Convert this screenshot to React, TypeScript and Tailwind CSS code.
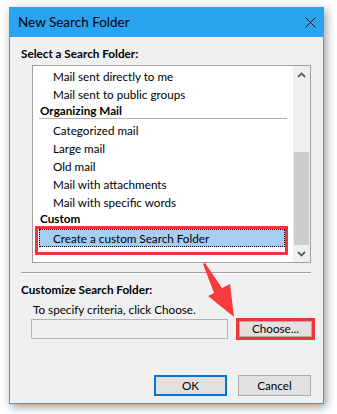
import React from 'react'

const font = { fontFamily: '"Segoe UI", Lato, "Noto Sans", sans-serif' }

function Chevron({ up }: { up?: boolean }) {
  return (
    <svg width="9" height="6" viewBox="0 0 9 6" className="block">
      <polyline
        points={up ? '1,5 4.5,1.5 8,5' : '1,1 4.5,4.5 8,1'}
        fill="none"
        stroke="#606060"
        strokeWidth="1.8"
      />
    </svg>
  )
}

function Item({ label }: { label: string }) {
  return <div className="h-[18px] leading-[18px] pl-[20px] text-black">{label}</div>
}

function Heading({ label, line }: { label: string; line?: boolean }) {
  return (
    <div>
      <div className="h-[15px] leading-[15px] pl-[7px] font-bold">{label}</div>
      {line && <div className="ml-[6px] w-[248px] h-px bg-[#b4b4b4] mb-[2px]" />}
    </div>
  )
}

export default function App() {
  return (
    <div className="w-[337px] h-[414px] bg-white overflow-hidden pl-[9px] pt-[7px] text-[11.7px] text-black" style={font}>
      <div className="w-[315px] h-[397px] flex flex-col shadow-[2px_3px_9px_rgba(0,0,0,0.4)]">
        {/* title bar */}
        <div className="h-[30px] bg-[#2aa4ef] flex items-center justify-between pl-[9px] pr-[8px] shrink-0">
          <span className="text-[13.5px]">New Search Folder</span>
          <svg width="11" height="11" viewBox="0 0 11 11">
            <path d="M0.5 0.5 L10.5 10.5 M10.5 0.5 L0.5 10.5" stroke="#111" strokeWidth="1" />
          </svg>
        </div>

        <div className="flex-1 bg-[#f0f0f0] border-x border-b border-[#2aa4ef] relative">
          <div className="pl-[11px] mt-[8px] h-[16px] leading-[16px] font-bold">Select a Search Folder:</div>

          {/* list box */}
          <div className="ml-[22px] mt-[4px] w-[279px] h-[198px] border border-[#a0a0a0] bg-white flex overflow-hidden">
            <div className="flex-1 pt-px overflow-hidden">
              <Item label="Mail sent directly to me" />
              <Item label="Mail sent to public groups" />
              <Heading label="Organizing Mail" line />
              <Item label="Categorized mail" />
              <Item label="Large mail" />
              <Item label="Old mail" />
              <Item label="Mail with attachments" />
              <Item label="Mail with specific words" />
              <Heading label="Custom" />
              <div className="ml-[2px] w-[253px] h-[29px] border-[3px] border-[#f0353a] pl-px">
                <div className="h-[18px] leading-[16px] bg-[#a6cdf2] border border-dotted border-black pl-[13px]">
                  Create a custom Search Folder
                </div>
              </div>
            </div>
            <div className="w-[17px] bg-[#f0f0f0] flex flex-col shrink-0">
              <div className="h-[17px] flex items-center justify-center">
                <Chevron up />
              </div>
              <div className="flex-1 px-px">
                <div className="mt-[69px] h-[93px] bg-[#cdcdcd]" />
              </div>
              <div className="h-[17px] flex items-center justify-center">
                <Chevron />
              </div>
            </div>
          </div>

          <div className="ml-[11px] mt-[9px] w-[290px] h-px bg-[#a0a0a0] shadow-[0_1px_0_#ffffff]" />

          <div className="pl-[11px] mt-[8px] h-[16px] leading-[16px] font-bold">Customize Search Folder:</div>
          <div className="pl-[23px] mt-[4px] h-[16px] leading-[16px]">To specify criteria, click Choose.</div>

          <div className="flex items-center mt-[1px] pl-[21px]">
            <div className="w-[197px] h-[20px] border border-[#b4b4b4] bg-[#f0f0f0]" />
            <div className="ml-[8px] w-[79px] h-[22px] border-[3px] border-[#f0353a]">
              <div className="h-full bg-[#e1e1e1] border border-[#adadad] flex items-center justify-center leading-none">
                Choose...
              </div>
            </div>
          </div>

          <div className="flex justify-end gap-[11px] pr-[12px] mt-[35px]">
            <div className="w-[73px] h-[21px] border-2 border-[#0078d7] bg-[#e1e1e1] flex items-center justify-center">
              OK
            </div>
            <div className="w-[73px] h-[21px] border border-[#adadad] bg-[#e1e1e1] flex items-center justify-center">
              Cancel
            </div>
          </div>

          {/* red pointer arrow */}
          <svg className="absolute left-[-10px] top-[-37px] pointer-events-none" width="337" height="414">
            <polygon
              points="203,264 205,263 222,288 230,284 234,317 208,296 214,293"
              fill="#f43b3e"
            />
          </svg>
        </div>
      </div>
    </div>
  )
}
